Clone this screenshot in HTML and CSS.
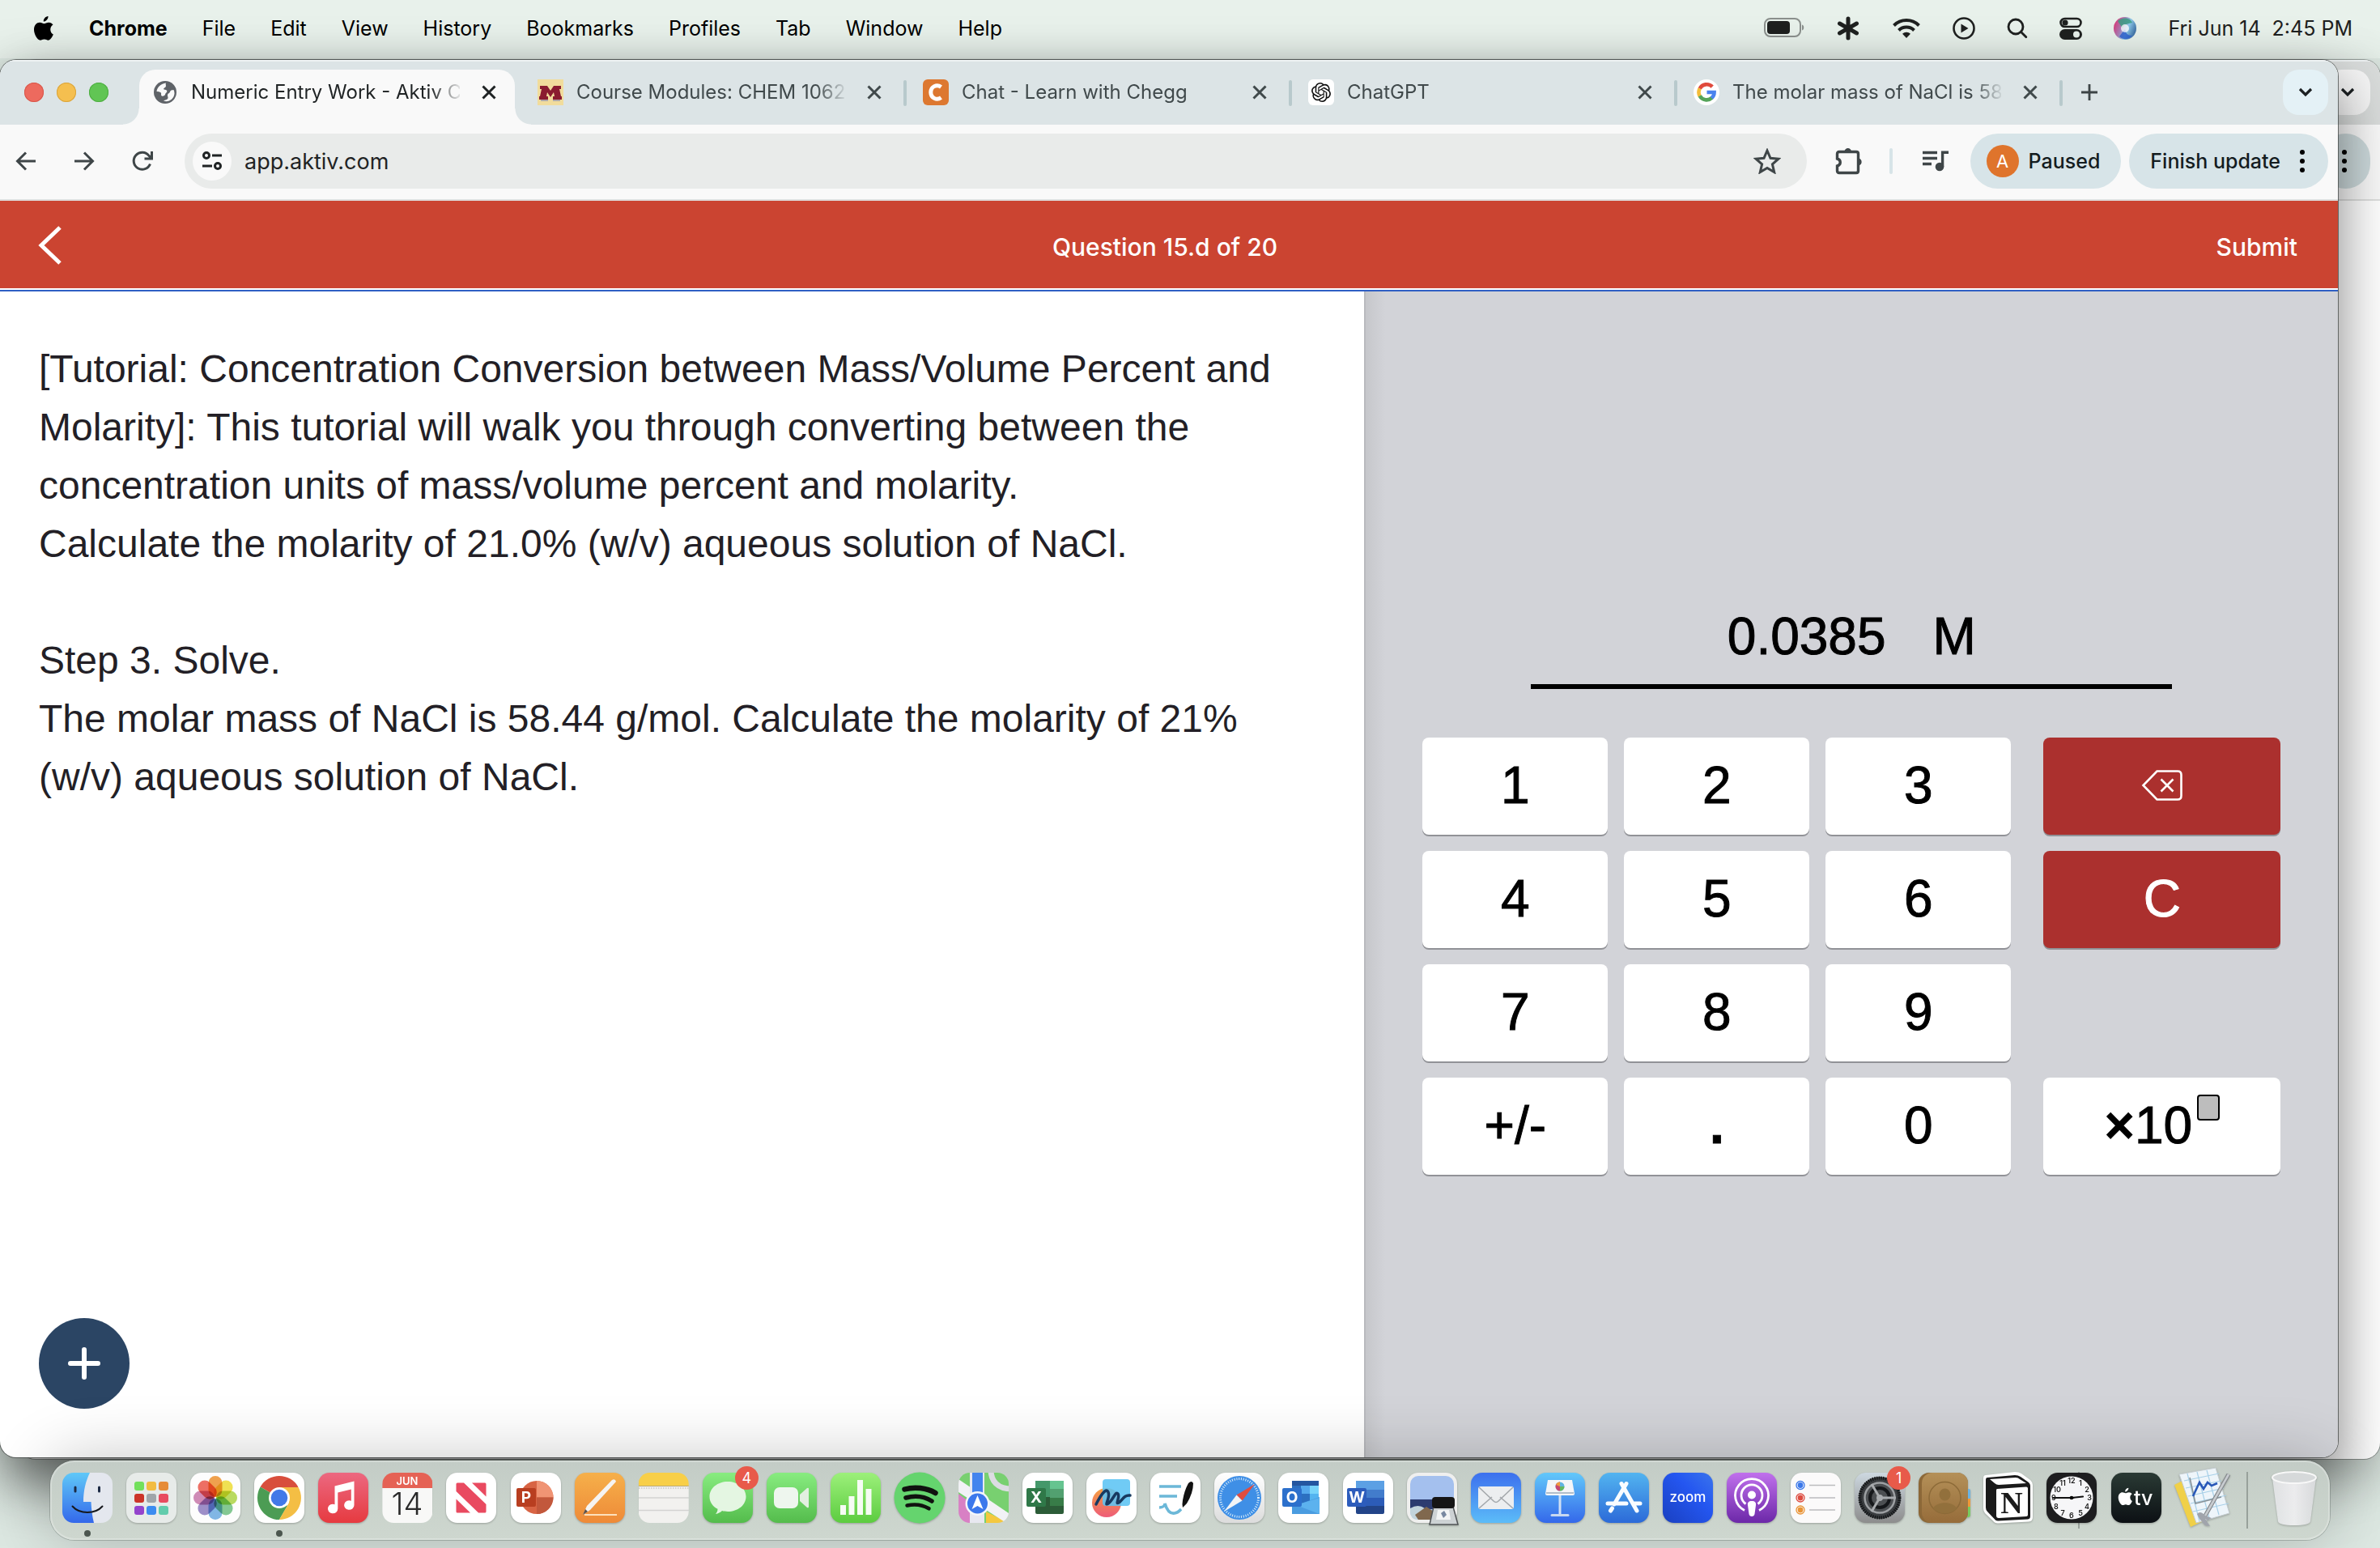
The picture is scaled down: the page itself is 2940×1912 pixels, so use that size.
FILE: index.html
```html
<!DOCTYPE html>
<html lang="en">
<head>
<meta charset="utf-8">
<title>Numeric Entry Work - Aktiv Chemistry</title>
<link rel="stylesheet" href="styles.css">
</head>
<body>
<header class="menubar">
  <nav class="menus" aria-label="Menu bar">
    <button class="menu menu-apple" aria-label="Apple"><svg width="26" height="32" viewBox="0 0 26 32"><path d="M18.500 1c.2 3.400-2.600 6.500-5.700 6.600C12.400 4.400 15.300 1.300 18.500 1zM24.800 23.600c-1.300 3.300-3.700 7.100-6.200 7.100-1.900 0-2.500-1.200-4.900-1.200s-3 1.200-4.900 1.200C5.200 30.700 1 23.500 1 17.600c0-5.600 3.500-8.800 7.100-8.800 2.300 0 4 1.400 5.400 1.400 1.300 0 3.300-1.500 5.800-1.500 2.100 0 4.100 1.100 5.200 2.800-4.700 2.900-3.900 9.900.3 12.100z"/></svg></button>
    <button class="menu menu-app">Chrome</button>
    <button class="menu">File</button>
    <button class="menu">Edit</button>
    <button class="menu">View</button>
    <button class="menu">History</button>
    <button class="menu">Bookmarks</button>
    <button class="menu">Profiles</button>
    <button class="menu">Tab</button>
    <button class="menu">Window</button>
    <button class="menu">Help</button>
  </nav>
  <div class="status">
    <svg width="50" height="26" viewBox="0 0 50 26"><rect x="1" y="1" width="44" height="22" rx="7" fill="none" stroke="#8b908d" stroke-width="2"/><rect x="4" y="4" width="28" height="16" rx="4" fill="#1f2120"/><path d="M47 8.500c3 .8 3 6.200 0 7z" fill="#8b908d"/></svg>
    <svg width="30" height="30" viewBox="0 0 30 30" stroke="#1f2120" stroke-width="5" stroke-linecap="round"><path d="M15 3v24M4.500 9l21 12M25.500 9l-21 12"/></svg>
    <svg width="36" height="28" viewBox="0 0 36 28" fill="none" stroke="#1f2120" stroke-width="4"><path d="M2.500 10.500a22 22 0 0 1 31 0M8.500 16.500a13.500 13.500 0 0 1 19 0"/><path d="M18 26l-5-5.200a7.200 7.200 0 0 1 10 0z" fill="#1f2120" stroke="none"/></svg>
    <svg width="28" height="28" viewBox="0 0 28 28"><circle cx="14" cy="14" r="12.500" fill="none" stroke="#1f2120" stroke-width="2.600"/><path d="M10.500 8.500v11l9-5.500z" fill="#1f2120"/></svg>
    <svg width="26" height="26" viewBox="0 0 26 26" fill="none" stroke="#1f2120" stroke-width="2.800" stroke-linecap="round"><circle cx="11" cy="11" r="9"/><path d="M17.800 17.800l6 6"/></svg>
    <svg width="28" height="28" viewBox="0 0 28 28"><rect x="1.500" y="2" width="25" height="10" rx="5" fill="none" stroke="#1f2120" stroke-width="2.600"/><circle cx="7" cy="7" r="3.600" fill="#1f2120"/><rect x="0" y="15" width="28" height="13" rx="6.500" fill="#1f2120"/><circle cx="21" cy="21.500" r="4" fill="#e8f1eb"/></svg>
    <svg width="28" height="28" viewBox="0 0 28 28"><defs><linearGradient id="siri" x1="0" y1=".3" x2="1" y2=".7"><stop offset="0" stop-color="#d83a78"/><stop offset=".35" stop-color="#a880b8"/><stop offset=".6" stop-color="#8cc8e8"/><stop offset="1" stop-color="#34649c"/></linearGradient></defs><circle cx="14" cy="14" r="14" fill="url(#siri)"/><path d="M5 5c5-5 15-5 18 2-6 1-11 3-12 7z" fill="#3c9c84" opacity=".85"/><path d="M7 24c5 5 12 4 16-1-6 0-8-3-9-8z" fill="#2a5fd0" opacity=".8"/><circle cx="14" cy="14" r="5" fill="#fff" opacity=".75"/></svg>
    <time class="clock">Fri Jun 14&nbsp; 2:45 PM</time>
  </div>
</header>

<main class="desktop">
  <section class="window window-back" aria-label="Background window">
    <div class="tabstrip"><button class="tab-search" aria-label="Search tabs"><svg width="18" height="12" viewBox="0 0 18 12"><path d="M2 2l7 7 7-7" fill="none" stroke="#1c2022" stroke-width="3.200"/></svg></button></div>
    <div class="toolbar"><button class="pill pill-update" aria-label="Menu"><svg width="6" height="28" viewBox="0 0 6 28"><circle cx="3" cy="3" r="3"/><circle cx="3" cy="14" r="3"/><circle cx="3" cy="25" r="3"/></svg></button></div>
  </section>

  <section class="window window-front" aria-label="Chrome">
    <div class="tabstrip">
      <div class="lights"><button class="light light-close" aria-label="Close"></button><button class="light light-min" aria-label="Minimize"></button><button class="light light-zoom" aria-label="Zoom"></button></div>
      <ul class="tabs">
        <li class="tab tab-active">
          <svg class="favicon" viewBox="0 0 32 32"><circle cx="16" cy="16" r="14" fill="#5f6368"/><path d="M17 4.500c-6 1-11 5-11.500 10.500 2 .2 5 .3 5.500 2 .4 1.300-.6 2.800.8 3.500 1.600.7 4-.2 4.500-2.500.3-1.500 2-1.500 2-3.500 0-1.800-3-1.500-4-2.200-.8-1 1.800-2.300 2.500-3.300.7-1.200-.8-3 .2-4.500zM26.500 13c-2.500.2-4 .6-4.500 2.500-.5 1.800-2.500 1.500-3 3.500-.4 2 1 2.500.4 4.500-.5 1.600-3.400 2-5.400 3 6 2.500 13-2 13.500-9 0-1.700-.3-3.200-1-4.500z" fill="#fafafa"/></svg>
          <a class="tab-title" href="#">Numeric Entry Work - Aktiv C</a>
          <button class="tab-close" aria-label="Close tab"><svg viewBox="0 0 24 24"><path d="M4.500 4.500l15 15M19.500 4.500l-15 15"/></svg></button>
        </li>
        <li class="tab">
          <svg class="favicon" viewBox="0 0 32 32"><rect width="32" height="32" fill="#f1dc9c"/><path d="M4 23h9v4H4zM19 23h9v4h-9z" fill="#b0a8a8"/><path d="M3 8h9l4 6 4-6h9v4h-2l2 9h1v4H19v-4h2l-1-5-4 6-4-6-1 5h2v4H2v-4h1l2-9H3z" fill="#8a1c30"/></svg>
          <a class="tab-title" href="#">Course Modules: CHEM 1062</a>
          <button class="tab-close" aria-label="Close tab"><svg viewBox="0 0 24 24"><path d="M4.500 4.500l15 15M19.500 4.500l-15 15"/></svg></button>
        </li>
        <li class="tab">
          <svg class="favicon" viewBox="0 0 32 32"><rect width="32" height="32" rx="6" fill="#dd7830"/><path d="M22.500 9.500C17 5.500 9.800 9 9.800 16S17 26.500 22.500 22.500" fill="none" stroke="#fff" stroke-width="5"/></svg>
          <a class="tab-title" href="#">Chat - Learn with Chegg</a>
          <button class="tab-close" aria-label="Close tab"><svg viewBox="0 0 24 24"><path d="M4.500 4.500l15 15M19.500 4.500l-15 15"/></svg></button>
        </li>
        <li class="tab">
          <svg class="favicon" viewBox="-4 -4 32 32"><rect x="-4" y="-4" width="32" height="32" rx="6" fill="#fff"/><path fill="#111" d="M22.2819 9.8211a5.9847 5.9847 0 0 0-.5157-4.9108 6.0462 6.0462 0 0 0-6.5098-2.9A6.0651 6.0651 0 0 0 4.9807 4.1818a5.9847 5.9847 0 0 0-3.9977 2.9 6.0462 6.0462 0 0 0 .7427 7.0966 5.98 5.98 0 0 0 .511 4.9107 6.051 6.051 0 0 0 6.5146 2.9001A5.9847 5.9847 0 0 0 13.2599 24a6.0557 6.0557 0 0 0 5.7718-4.2058 5.9894 5.9894 0 0 0 3.9977-2.9001 6.0557 6.0557 0 0 0-.7475-7.0729zm-9.022 12.6081a4.4755 4.4755 0 0 1-2.8764-1.0408l.1419-.0804 4.7783-2.7582a.7948.7948 0 0 0 .3927-.6813v-6.7369l2.02 1.1686a.071.071 0 0 1 .038.052v5.5826a4.504 4.504 0 0 1-4.4945 4.4944zm-9.6607-4.1254a4.4708 4.4708 0 0 1-.5346-3.0137l.142.0852 4.783 2.7582a.7712.7712 0 0 0 .7806 0l5.8428-3.3685v2.3324a.0804.0804 0 0 1-.0332.0615L9.74 19.9502a4.4992 4.4992 0 0 1-6.1408-1.6464zM2.3408 7.8956a4.485 4.485 0 0 1 2.3655-1.9728V11.6a.7664.7664 0 0 0 .3879.6765l5.8144 3.3543-2.0201 1.1685a.0757.0757 0 0 1-.071 0l-4.8303-2.7865A4.504 4.504 0 0 1 2.3408 7.872zm16.5963 3.8558L13.1038 8.364 15.1192 7.2a.0757.0757 0 0 1 .071 0l4.8303 2.7913a4.4944 4.4944 0 0 1-.6765 8.1042v-5.6772a.79.79 0 0 0-.407-.667zm2.0107-3.0231l-.142-.0852-4.7735-2.7818a.7759.7759 0 0 0-.7854 0L9.409 9.2297V6.8974a.0662.0662 0 0 1 .0284-.0615l4.8303-2.7866a4.4992 4.4992 0 0 1 6.6802 4.66zM8.3065 12.863l-2.02-1.1638a.0804.0804 0 0 1-.038-.0567V6.0742a4.4992 4.4992 0 0 1 7.3757-3.4537l-.142.0805L8.704 5.459a.7948.7948 0 0 0-.3927.6813zm1.0976-2.3654l2.602-1.4998 2.6069 1.4998v2.9994l-2.5974 1.4997-2.6067-1.4997Z"/></svg>
          <a class="tab-title" href="#">ChatGPT</a>
          <button class="tab-close" aria-label="Close tab"><svg viewBox="0 0 24 24"><path d="M4.500 4.500l15 15M19.500 4.500l-15 15"/></svg></button>
        </li>
        <li class="tab">
          <svg class="favicon" viewBox="0 0 32 32"><circle cx="16" cy="16" r="16" fill="#fff"/><g fill="none" stroke-width="4.600"><path d="M23.200 9.200A9.600 9.600 0 0 0 7.700 11.600" stroke="#e04a3c"/><path d="M7.700 11.400a9.600 9.600 0 0 0 0 9.200" stroke="#f4bd3a"/><path d="M7.700 20.400a9.600 9.600 0 0 0 15 2.400" stroke="#55a45a"/><path d="M22.400 23.100a9.600 9.600 0 0 0 3.200-7.100H16.500" stroke="#4b83ee"/></g></svg>
          <a class="tab-title" href="#">The molar mass of NaCl is 58</a>
          <button class="tab-close" aria-label="Close tab"><svg viewBox="0 0 24 24"><path d="M4.500 4.500l15 15M19.500 4.500l-15 15"/></svg></button>
        </li>
      </ul>
      <button class="new-tab" aria-label="New tab"><svg width="22" height="22" viewBox="0 0 22 22"><path d="M11 1v20M1 11h20" stroke="#3d4446" stroke-width="2.800"/></svg></button>
      <button class="tab-search" aria-label="Search tabs"><svg width="18" height="12" viewBox="0 0 18 12"><path d="M2 2l7 7 7-7" fill="none" stroke="#1c2022" stroke-width="3.200"/></svg></button>
    </div>

    <div class="toolbar">
      <div class="nav-buttons">
        <button aria-label="Back"><svg width="28" height="28" viewBox="0 0 28 28"><path d="M26 14H4M14 3.500L3.500 14 14 24.500"/></svg></button>
        <button aria-label="Forward"><svg width="28" height="28" viewBox="0 0 28 28"><path d="M2 14h22M14 3.500L24.500 14 14 24.500"/></svg></button>
        <button aria-label="Reload"><svg width="28" height="28" viewBox="0 0 28 28"><path d="M23.500 17.500A10.500 10.500 0 1 1 22 7.300L25 10.500M25.500 2v9h-9"/></svg></button>
      </div>
      <div class="omnibox">
        <button class="site-info" aria-label="Site information"><svg width="26" height="24" viewBox="0 0 26 24" fill="none" stroke="#1f2324" stroke-width="3"><circle cx="6" cy="5" r="3.500"/><path d="M13 5h12M1 18h12"/><circle cx="20" cy="18" r="3.500"/></svg></button>
        <input class="url" type="text" aria-label="Address" value="app.aktiv.com">
        <button class="star" aria-label="Bookmark"><svg width="34" height="32" viewBox="0 0 34 32"><path d="M17 3l4 9.300 10 .9-7.600 6.600 2.300 9.800L17 24.400l-8.700 5.200 2.300-9.800L3 13.200l10-.9z" fill="none" stroke="#3f4648" stroke-width="3"/></svg></button>
      </div>
      <button class="tool" aria-label="Extensions"><svg width="36" height="36" viewBox="0 0 36 36"><path d="M3.500 9c0-1.500.8-2.500 2.500-2.500H27c1.500 0 2.500 1 2.500 2.500v21c0 1.500-1 2.500-2.500 2.500H6c-1.700 0-2.500-1-2.500-2.500v-6c5-1.500 5-7.500 0-9z" fill="none" stroke="#3f4648" stroke-width="3.400"/><path d="M12.500 6.500C12.500.500 21 .500 21 6.500zM29.500 14.500c5.500 0 5.500 9 0 9z" fill="#3f4648"/></svg></button>
      <span class="rule"></span>
      <button class="tool" aria-label="Media controls"><svg width="34" height="30" viewBox="0 0 34 30"><path d="M1 4.500h18M1 11.500h18M1 18.500h11" stroke="#3f4648" stroke-width="3.400"/><circle cx="22" cy="22" r="5.300" fill="#3f4648"/><path d="M25.600 22V4.300h7.400" fill="none" stroke="#3f4648" stroke-width="3.400"/></svg></button>
      <button class="pill pill-profile"><span class="avatar">A</span>Paused</button>
      <button class="pill pill-update">Finish update<svg width="6" height="28" viewBox="0 0 6 28"><circle cx="3" cy="3" r="3"/><circle cx="3" cy="14" r="3"/><circle cx="3" cy="25" r="3"/></svg></button>
    </div>

    <header class="app-header">
      <button class="app-back" aria-label="Back"><svg width="40" height="56" viewBox="0 0 40 56"><path d="M34 4L11 26l23 22" fill="none" stroke="#fff" stroke-width="5"/></svg></button>
      <h1 class="app-title">Question 15.d of 20</h1>
      <button class="app-submit">Submit</button>
    </header>

    <div class="app-body">
      <article class="question">
        <div class="prompt">
          <p>[Tutorial: Concentration Conversion between Mass/Volume Percent and Molarity]: This tutorial will walk you through converting between the concentration units of mass/volume percent and molarity.</p>
          <p>Calculate the molarity of 21.0% (w/v) aqueous solution of NaCl.</p>
          <p class="step">Step 3. Solve.</p>
          <p>The molar mass of NaCl is 58.44 g/mol. Calculate the molarity of 21% (w/v) aqueous solution of NaCl.</p>
        </div>
        <button class="fab" aria-label="Add"><svg width="40" height="40" viewBox="0 0 40 40"><path d="M20 3v34M3 20h34" stroke="#fff" stroke-width="6" stroke-linecap="round"/></svg></button>
      </article>
      <aside class="answer">
        <div class="display"><output>0.0385</output><span>M</span></div>
        <div class="keypad">
          <button class="key">1</button><button class="key">2</button><button class="key">3</button>
          <button class="key key-red key-wide" aria-label="Delete"><svg width="52" height="40" viewBox="0 0 52 40" fill="none" stroke="#fff" stroke-width="2.600"><path d="M19.500 2.500H45q4.500 0 4.500 4.500v26q0 4.500-4.500 4.500H19.500L2.500 20z"/><path d="M24.500 12.500l15 15M39.500 12.500l-15 15"/></svg></button>
          <button class="key">4</button><button class="key">5</button><button class="key">6</button>
          <button class="key key-red key-wide">C</button>
          <button class="key">7</button><button class="key">8</button><button class="key">9</button>
          <button class="key key-first">+/-</button><button class="key key-dot">.</button><button class="key">0</button>
          <button class="key key-wide key-exp"><span class="times">×</span>10<span class="exp-box"></span></button>
        </div>
      </aside>
    </div>
  </section>

  <nav class="dock" aria-label="Dock">
    <svg class="defs" width="0" height="0" aria-hidden="true"><defs>
      <linearGradient id="g-finder" x2="0" y2="1"><stop stop-color="#5fc8f8"/><stop offset="1" stop-color="#3468ea"/></linearGradient>
      <linearGradient id="g-music" x2="0" y2="1"><stop stop-color="#ec6880"/><stop offset="1" stop-color="#e63a40"/></linearGradient>
      <linearGradient id="g-pages" x2="0" y2="1"><stop stop-color="#f6b04a"/><stop offset="1" stop-color="#ee8a38"/></linearGradient>
      <linearGradient id="g-green" x2="0" y2="1"><stop stop-color="#88ec80"/><stop offset="1" stop-color="#54bc4c"/></linearGradient>
      <linearGradient id="g-numbers" x2="0" y2="1"><stop stop-color="#9cf07a"/><stop offset="1" stop-color="#5ccc40"/></linearGradient>
      <linearGradient id="g-white" x2="0" y2="1"><stop stop-color="#fff"/><stop offset="1" stop-color="#dcdcdc"/></linearGradient>
      <linearGradient id="g-sky" x2="0" y2="1"><stop stop-color="#62c8fa"/><stop offset="1" stop-color="#3468ea"/></linearGradient>
      <linearGradient id="g-mail" x2="0" y2="1"><stop stop-color="#3c70ee"/><stop offset="1" stop-color="#5cbcf8"/></linearGradient>
      <linearGradient id="g-store" x2="0" y2="1"><stop stop-color="#52b4f0"/><stop offset="1" stop-color="#2c6ad8"/></linearGradient>
      <linearGradient id="g-zoom" x1="1" x2="0" y2="1"><stop stop-color="#3a74ec"/><stop offset=".4" stop-color="#2456f0"/><stop offset="1" stop-color="#1a40c0"/></linearGradient>
      <linearGradient id="g-pod" x2="0" y2="1"><stop stop-color="#c070ec"/><stop offset="1" stop-color="#6c28a8"/></linearGradient>
      <linearGradient id="g-freeform" x2="0" y2="1"><stop stop-color="#f4a040"/><stop offset="1" stop-color="#ee5c78"/></linearGradient>
      <linearGradient id="g-set" x2="0" y2="1"><stop stop-color="#cdd8e0"/><stop offset="1" stop-color="#8c8c8c"/></linearGradient>
      <linearGradient id="g-contacts" x2="0" y2="1"><stop stop-color="#b49058"/><stop offset="1" stop-color="#966c3a"/></linearGradient>
      <linearGradient id="g-tv" x2="0" y2="1"><stop stop-color="#2a3a34"/><stop offset="1" stop-color="#0c1014"/></linearGradient>
      <linearGradient id="g-trash"><stop stop-color="#e4e6e8"/><stop offset=".5" stop-color="#f2f2f4"/><stop offset="1" stop-color="#dcdee0"/></linearGradient>
      <clipPath id="tile"><rect width="62" height="62" rx="14"/></clipPath>
    </defs></svg>
    <div class="dock-apps">
      <button class="app running" aria-label="Finder"><svg viewBox="0 0 62 62" clip-path="url(#tile)"><rect width="62" height="62" fill="url(#g-finder)"/><path d="M34 0h28v62H39c-2-8-3-16-3.500-26H26C26 22 29 10 34 0z" fill="#e4e7ee"/><path d="M16 18v5M45.500 18v5" stroke="#1c2a44" stroke-width="3" stroke-linecap="round"/><path d="M12.500 41.500c9 10 28 10 37 0" fill="none" stroke="#16181c" stroke-width="2" stroke-linecap="round"/></svg></button>
      <button class="app" aria-label="Launchpad"><svg viewBox="0 0 62 62"><rect width="62" height="62" rx="14" fill="#e7ebe9"/><rect x="10" y="11" width="12" height="11" rx="3" fill="#72e05c"/><rect x="25" y="11" width="12" height="11" rx="3" fill="#f2bc42"/><rect x="40" y="11" width="12" height="11" rx="3" fill="#e68c38"/><rect x="10" y="26" width="12" height="11" rx="3" fill="#cc3428"/><rect x="25" y="26" width="12" height="11" rx="3" fill="#a0a6aa"/><rect x="40" y="26" width="12" height="11" rx="3" fill="#e84c60"/><rect x="10" y="41" width="12" height="11" rx="3" fill="#9444cc"/><rect x="25" y="41" width="12" height="11" rx="3" fill="#3c8cf0"/><rect x="40" y="41" width="12" height="11" rx="3" fill="#62ccac"/></svg></button>
      <button class="app" aria-label="Photos"><svg viewBox="0 0 62 62"><rect width="62" height="62" rx="14" fill="#fdfdfd"/><g class="petals"><rect x="22.500" y="4" width="17" height="26" rx="8.500" fill="#f0983a"/><rect x="22.500" y="4" width="17" height="26" rx="8.500" fill="#f0e040" transform="rotate(45 31 31)"/><rect x="22.500" y="4" width="17" height="26" rx="8.500" fill="#b4d850" transform="rotate(90 31 31)"/><rect x="22.500" y="4" width="17" height="26" rx="8.500" fill="#78c488" transform="rotate(135 31 31)"/><rect x="22.500" y="4" width="17" height="26" rx="8.500" fill="#74b0e4" transform="rotate(180 31 31)"/><rect x="22.500" y="4" width="17" height="26" rx="8.500" fill="#9484c4" transform="rotate(225 31 31)"/><rect x="22.500" y="4" width="17" height="26" rx="8.500" fill="#cc80b0" transform="rotate(270 31 31)"/><rect x="22.500" y="4" width="17" height="26" rx="8.500" fill="#ee6054" transform="rotate(315 31 31)"/></g></svg></button>
      <button class="app running" aria-label="Google Chrome"><svg viewBox="0 0 62 62"><rect width="62" height="62" rx="14" fill="#fff"/><path d="M31 31L7.600 17.500A27 27 0 0 1 54.400 17.500z" fill="#d84e3c"/><path d="M31 31L7.600 17.500A27 27 0 0 0 31 58l10-17z" fill="#4c9c54"/><path d="M31 18H54.600A27 27 0 0 1 31 58l12-21z" fill="#f4be44"/><circle cx="31" cy="31" r="13" fill="#fff"/><circle cx="31" cy="31" r="10.300" fill="#4279e8"/></svg></button>
      <button class="app" aria-label="Music"><svg viewBox="0 0 62 62"><rect width="62" height="62" rx="14" fill="url(#g-music)"/><path d="M20.500 16.500L44.500 10.500V40a6.200 5.800 0 1 1-3.700-5.300V20.500l-16.500 4V44.500a6.200 5.800 0 1 1-3.800-5.300z" fill="#fff"/></svg></button>
      <button class="app" aria-label="Calendar"><svg viewBox="0 0 62 62" clip-path="url(#tile)"><rect width="62" height="62" fill="#f8f8f7"/><rect width="62" height="19" fill="#e56255"/><text class="cal-month" x="31" y="15">JUN</text><text class="cal-day" x="31" y="52">14</text></svg></button>
      <button class="app" aria-label="News"><svg viewBox="0 0 62 62"><rect width="62" height="62" rx="14" fill="#fff"/><path d="M14 12.500h8l27.500 26.500v9q0 1.500-1.500 1.500h-8L12.500 23v-9q0-1.500 1.500-1.500zM32 12.500h16q1.500 0 1.500 1.500v15.500zM12.500 32.500l17.500 17H14q-1.500 0-1.500-1.500z" fill="#e94a60"/></svg></button>
      <button class="app" aria-label="PowerPoint"><svg viewBox="0 0 62 62"><rect width="62" height="62" rx="14" fill="#fff"/><circle cx="32" cy="30.500" r="20.500" fill="#d86444"/><path d="M32 10a20.500 20.500 0 0 1 20.500 20.500H32z" fill="#f09474"/><path d="M32 30.500h20.500A20.500 20.500 0 0 1 32 51z" fill="#c2583c"/><rect x="7" y="19" width="24" height="23" rx="2" fill="#b83e20"/><text class="office" x="19" y="37">P</text></svg></button>
      <button class="app" aria-label="Pages"><svg viewBox="0 0 62 62"><rect width="62" height="62" rx="14" fill="url(#g-pages)"/><path d="M10 52l5-11L46 9q4-2 5 2L19 46z" fill="#f6f4f2"/><path d="M10 52l3-7 3 3z" fill="#5c5048"/><path d="M12 52h40" stroke="#fde0bc" stroke-width="2"/></svg></button>
      <button class="app" aria-label="Notes"><svg viewBox="0 0 62 62" clip-path="url(#tile)"><rect width="62" height="62" fill="#f2f1ef"/><rect width="62" height="16" fill="#f8cf48"/><path d="M0 16.500h62" stroke="#b8a878" stroke-width="1"/><path d="M0 19h62" stroke="#c8c6c4" stroke-width="1.500" stroke-dasharray="1.500 1.500"/><path d="M0 31h62M0 46.500h62" stroke="#d4d3d2" stroke-width="1.500"/></svg></button>
      <button class="app" aria-label="Messages"><svg viewBox="0 0 62 62"><rect width="62" height="62" rx="14" fill="url(#g-green)"/><path d="M31 11c12.500 0 22.500 8 22.500 18.500S43.500 48 31 48c-2.500 0-5-.3-7-.9-2 2-5 3.600-8 3.900 1.700-2 2.500-4 2.500-6.300C12 41.500 8.500 36 8.500 29.500 8.500 19 18.500 11 31 11z" fill="#e4f6e2"/></svg><span class="badge">4</span></button>
      <button class="app" aria-label="FaceTime"><svg viewBox="0 0 62 62"><rect width="62" height="62" rx="14" fill="url(#g-green)"/><rect x="9" y="18" width="30" height="26" rx="7" fill="#eef6ee"/><path d="M41 27l9-8q2-1 2 1v22q0 2-2 1l-9-8z" fill="#e2efe0"/></svg></button>
      <button class="app" aria-label="Numbers"><svg viewBox="0 0 62 62"><rect width="62" height="62" rx="14" fill="url(#g-numbers)"/><path d="M12 40h7v12h-7zM22.500 29h7v23h-7zM33 9h7v43h-7zM43.500 20h7v32h-7z" fill="#f6fcf4"/></svg></button>
      <button class="app" aria-label="Spotify"><svg viewBox="0 0 62 62"><circle cx="31" cy="31" r="31.500" fill="#65d46e"/><g fill="none" stroke="#10120f" stroke-linecap="round"><path d="M12.500 20.500c12-3.500 27-2 38 4.500" stroke-width="6.500"/><path d="M14 31c11-3 23-1.500 32 4" stroke-width="5.500"/><path d="M15.500 40.500c9-2 19-1 27 3.800" stroke-width="4.500"/></g></svg></button>
      <button class="app" aria-label="Maps"><svg viewBox="0 0 62 62" clip-path="url(#tile)"><rect width="62" height="62" fill="#78d070"/><path d="M0 26l24 18v18H0z" fill="#d880c4"/><path d="M34 62V48l28 14z" fill="#f4c840"/><path d="M0 8l62 42v14L0 24z" fill="#f2f2f6"/><path d="M14 0h18v62H14z" fill="#e8e8f0"/><path d="M40-4c0 14 8 24 26 24" fill="none" stroke="#dcdce2" stroke-width="7"/><path d="M17 0h13v30H17z" fill="#4484ee"/><circle cx="23.500" cy="38" r="15" fill="#f4f6fa"/><circle cx="23.500" cy="38" r="12.500" fill="#3c78ec"/><path d="M23.500 28l7 17-7-4-7 4z" fill="#fff"/></svg></button>
      <button class="app" aria-label="Excel"><svg viewBox="0 0 62 62"><rect width="62" height="62" rx="14" fill="#fff"/><rect x="16" y="10" width="35" height="41" rx="2" fill="#2c5c38"/><path d="M16 10h18v20H16z" fill="#44986a"/><path d="M34 10h17v10H34z" fill="#66c490"/><path d="M34 20h17v11H34z" fill="#52a070"/><path d="M34 31h17v10H34z" fill="#387c48"/><rect x="5" y="19" width="24" height="23" rx="2" fill="#2f7848"/><text class="office" x="17" y="37">X</text></svg></button>
      <button class="app" aria-label="Freeform"><svg viewBox="0 0 62 62"><rect width="62" height="62" rx="14" fill="#fff"/><circle cx="25" cy="37" r="18" fill="url(#g-freeform)"/><rect x="20" y="8" width="34" height="33" rx="4" fill="#5cc4f4" opacity=".88"/><path d="M12 39c4-8 12-22 15-15s-6 18 0 14 9-16 12-12-4 14 1 11 6-10 14-9" fill="none" stroke="#183a60" stroke-width="3.500" stroke-linecap="round"/></svg></button>
      <button class="app" aria-label="Goodnotes"><svg viewBox="0 0 62 62"><rect width="62" height="62" rx="14" fill="#fff"/><path d="M11 17h27M11 29h22M11 43c4 0 7-2 7-5 2 7 6 13 12 12 4-.5 6-3 8-5" fill="none" stroke="#6cb8d8" stroke-width="3.600"/><path d="M47 13q4-4 6 0 0 12-8 25l-5 5q-1-4 0-9 2-12 7-21z" fill="#111"/></svg></button>
      <button class="app" aria-label="Safari"><svg viewBox="0 0 62 62"><rect width="62" height="62" rx="14" fill="url(#g-white)"/><circle cx="31" cy="31" r="27" fill="#3f8fe6"/><circle cx="31" cy="31" r="23.500" fill="none" stroke="#d8ecfa" stroke-width="3" stroke-dasharray="1 1.800"/><path d="M50 14L34.500 34.500 27.500 27.500z" fill="#e04c40"/><path d="M12 48l15.500-20.500 7 7z" fill="#f2f4f6"/></svg></button>
      <button class="app" aria-label="Outlook"><svg viewBox="0 0 62 62"><rect width="62" height="62" rx="14" fill="#fff"/><path d="M17 10h33v41H17z" fill="#2c70c0"/><path d="M17 10h33v6H17z" fill="#2456a0"/><path d="M28 16h11v10H28z" fill="#54a8ec"/><path d="M39 16h11v10H39z" fill="#78d4fa"/><path d="M39 26h11v10H39z" fill="#54b4f0"/><path d="M17 42l34-12v21H17z" fill="#4a9ce0"/><path d="M22 40l29-9v20z" fill="#5cb2ee"/><rect x="5" y="19" width="24" height="23" rx="2" fill="#2c70cc"/><text class="office" x="17" y="37">O</text></svg></button>
      <button class="app" aria-label="Word"><svg viewBox="0 0 62 62"><rect width="62" height="62" rx="14" fill="#fff"/><rect x="16" y="10" width="35" height="41" rx="2" fill="#224488"/><path d="M16 10h35v11H16z" fill="#5ca0e4"/><path d="M16 21h35v10H16z" fill="#427ccc"/><path d="M16 31h35v10H16z" fill="#2c5cb8"/><rect x="5" y="19" width="24" height="23" rx="2" fill="#2c5cbc"/><text class="office" x="17" y="37">W</text></svg></button>
      <button class="app" aria-label="Preview"><svg viewBox="0 0 62 62"><rect width="62" height="62" rx="14" fill="#efefee"/><rect x="4" y="4" width="54" height="54" rx="10" fill="#a4c0ee"/><path d="M4 33h54v12H4z" fill="#2c3c70"/><path d="M4 44q10-6 18 0t20-2 16 2v4q0 10-10 10H14Q4 58 4 48z" fill="#c2d4dc"/><path d="M10 52l14-10 12 8-6 8H14z" fill="#80684e"/><path d="M33 42h24l6 22H28z" fill="#cdd2d4" stroke="#505456" stroke-width="1.500"/><path d="M38 46h14l2 12H36z" fill="#f2f4f4"/><path d="M42 50l4-3 3 5-4 4z" fill="#7888a0"/><rect x="31" y="30" width="28" height="14" rx="4" fill="#151515"/></svg></button>
      <button class="app" aria-label="Mail"><svg viewBox="0 0 62 62"><rect width="62" height="62" rx="14" fill="url(#g-mail)"/><rect x="9" y="17" width="44" height="28" rx="3" fill="#eceef0"/><path d="M10 44l16-14M52 44L36 30M10 18l18 17q3 3 6 0l18-17" fill="none" stroke="#a4a8ac" stroke-width="1.600"/></svg></button>
      <button class="app" aria-label="Keynote"><svg viewBox="0 0 62 62"><rect width="62" height="62" rx="14" fill="url(#g-sky)"/><path d="M16 9h30l3 17q0 2-2 2H15q-2 0-2-2z" fill="#f4f6f8"/><path d="M14 25h34" stroke="#9cacbc" stroke-width="1.500"/><path d="M31 28v23" stroke="#d0e0f4" stroke-width="3"/><path d="M21 52.500h20" stroke="#c8d8f0" stroke-width="3" stroke-linecap="round"/><circle cx="31" cy="17" r="5.500" fill="#60b4e0"/><path d="M31 17v-5.500a5.500 5.500 0 0 0 0 11z" fill="#c84870"/><path d="M31 17v5.500a5.500 5.500 0 0 0 5.500-5.500z" fill="#64b860"/><path d="M31 17v-5.500a5.500 5.500 0 0 0-5 3.500z" fill="#f09c3c"/></svg></button>
      <button class="app" aria-label="App Store"><svg viewBox="0 0 62 62"><rect width="62" height="62" rx="14" fill="url(#g-store)"/><path d="M34 13.500L19 39M28 13.500l19 33.500M11 38h23M43 38h8M16.500 44l-2 3" fill="none" stroke="#f8fcff" stroke-width="5" stroke-linecap="round"/></svg></button>
      <button class="app" aria-label="Zoom"><svg viewBox="0 0 62 62"><rect width="62" height="62" rx="14" fill="url(#g-zoom)"/><text class="zoom-word" x="31" y="36">zoom</text></svg></button>
      <button class="app" aria-label="Podcasts"><svg viewBox="0 0 62 62"><rect width="62" height="62" rx="14" fill="url(#g-pod)"/><g fill="none" stroke="#fff" stroke-width="2.800"><path d="M22 46.500a20.500 20.500 0 1 1 18 0"/><path d="M23.500 38.500a13 13 0 1 1 15 0"/></g><circle cx="31" cy="27.500" r="5" fill="#fff"/><path d="M31 35c4 0 5.500 2 5 5l-1.500 11c-.5 4-6.500 4-7 0L26 40c-.5-3 1-5 5-5z" fill="#fff"/></svg></button>
      <button class="app" aria-label="Reminders"><svg viewBox="0 0 62 62"><rect width="62" height="62" rx="14" fill="#fbfafa"/><path d="M23 15.500h32M23 31h32M23 46h32" stroke="#bcbcbe" stroke-width="1.500"/><g stroke-width="1.300"><circle cx="12" cy="15.500" r="5" fill="#fff" stroke="#3c78e8"/><circle cx="12" cy="31" r="5" fill="#fff" stroke="#dc4c40"/><circle cx="12" cy="46" r="5" fill="#fff" stroke="#e89438"/></g><circle cx="12" cy="15.500" r="3.400" fill="#3c78e8"/><circle cx="12" cy="31" r="3.400" fill="#dc4c40"/><circle cx="12" cy="46" r="3.400" fill="#e89438"/></svg></button>
      <button class="app" aria-label="System Settings"><svg viewBox="0 0 62 62"><rect width="62" height="62" rx="14" fill="url(#g-set)"/><circle cx="31" cy="31" r="26" fill="#3a3d40"/><circle cx="31" cy="31" r="24.500" fill="none" stroke="#141618" stroke-width="4" stroke-dasharray="1.500 1.200"/><circle cx="31" cy="31" r="18.500" fill="#4c4f52" stroke="#9c9fa2" stroke-width="2.500"/><circle cx="31" cy="31" r="12" fill="none" stroke="#15171a" stroke-width="4"/><path d="M31 31h20M31 31L21 14M31 31L21 48" stroke="#a8abae" stroke-width="3"/><circle cx="31" cy="31" r="4" fill="#a8abae"/></svg><span class="badge">1</span></button>
      <button class="app" aria-label="Contacts"><svg viewBox="0 0 62 62"><path d="M55 20h7q2 0 2 2v10h-9z" fill="#6cb4e4"/><path d="M55 32h9v10h-9z" fill="#f09838"/><path d="M55 42h9v10q0 3-3 3h-6z" fill="#78cc60"/><rect width="61" height="62" rx="13" fill="#8c6838"/><rect x="4" width="57" height="62" rx="13" fill="url(#g-contacts)"/><g fill="none" stroke="#8c6a38" stroke-width="1.500"><circle cx="32.500" cy="31" r="19.500"/></g><ellipse cx="32.500" cy="27" rx="7" ry="7.500" fill="#92703c"/><path d="M18 44c4-9 25-9 29 0-7 8-22 8-29 0z" fill="#92703c"/></svg></button>
      <button class="app" aria-label="Notion"><svg viewBox="0 0 62 62"><path d="M4 3L40-1q5 0 8 2l11 8q3 3 3 6v40q0 5-5 5.500l-38 2q-4 0-6-3L3 50q-2-3-2-6V7q0-4 3-4z" fill="#fff"/><path d="M6 6l34-3q4 0 7 2l10 7q2 2 2 4v38q0 3-3 3.500l-37 2q-3 0-4-2L6 48q-2-2-2-5V9q0-3 2-3z" fill="#1a1a1a"/><path d="M9 8l32-2q3 0 5 2l8 5-34 2q-3 0-5-2z" fill="#fff"/><path d="M18 20l36-2.500q2 0 2 2V52q0 2-2 2l-34 2q-3 0-3-3V22q0-2 1-2z" fill="#fff"/><text class="notion-n" x="36" y="50">N</text></svg></button>
      <button class="app app-clock" aria-label="Clock"><svg viewBox="0 0 62 62"><rect width="62" height="62" rx="14" fill="#1d1d1f"/><circle cx="31" cy="31" r="26.500" fill="#f6f6f8"/><g class="hours"><text x="31" y="12.500">12</text><text x="42" y="15.500">1</text><text x="50" y="23.500">2</text><text x="53" y="34">3</text><text x="50" y="44.500">4</text><text x="42" y="52.500">5</text><text x="31" y="55.500">6</text><text x="20" y="52.500">7</text><text x="12" y="44.500">8</text><text x="9" y="34">9</text><text x="13" y="23.500">10</text><text x="20" y="15.500">11</text></g><path d="M34 31H8M31 31l14-1.500" stroke="#111" stroke-width="2.200" stroke-linecap="round"/><circle cx="31" cy="31" r="2.300"/></svg></button>
      <button class="app" aria-label="TV"><svg viewBox="0 0 62 62"><rect width="62" height="62" rx="14" fill="url(#g-tv)"/><g transform="translate(8 18) scale(.72)"><path d="M18.500 1c.2 3.400-2.600 6.500-5.700 6.600C12.400 4.400 15.300 1.300 18.500 1zM24.800 23.600c-1.300 3.300-3.700 7.100-6.200 7.100-1.900 0-2.500-1.200-4.900-1.200s-3 1.200-4.900 1.200C5.200 30.700 1 23.500 1 17.600c0-5.600 3.500-8.800 7.100-8.800 2.300 0 4 1.400 5.400 1.400 1.300 0 3.300-1.500 5.800-1.500 2.100 0 4.100 1.100 5.200 2.800-4.700 2.900-3.900 9.900.3 12.100z" fill="#fff"/></g><text class="tv-word" x="28" y="40">tv</text></svg></button>
      <button class="app" aria-label="Grapher"><svg viewBox="0 0 62 62"><path d="M-1 15l12-6 34 46-26 12z" fill="#f0d048"/><path d="M5 2L50-6l17 56-41 12z" fill="#eef5fa" stroke="#c4ccd0"/><path d="M11 10l43-9M13 19l44-9M16 29l44-10M19 38l44-10M22 48l44-10M15 1l15 59M27-1l15 57M39-3l15 55" stroke="#a8d0e8" stroke-width="1.200"/><path d="M18 6l7 32 32-8" fill="none" stroke="#889298" stroke-width="1.600"/><path d="M22 29l8-17 5 8 5-8 5 4 7-3" fill="none" stroke="#2858b8" stroke-width="2.600"/><path d="M66 2L36 55" stroke="#84888c" stroke-width="5"/><path d="M66 2L36 55" stroke="#c8ccd0" stroke-width="2.600"/><path d="M27 51q4-5 10 2l8 3-5 3-3-2 6 9-6-1-7-8z" fill="#a0a4ac"/></svg></button>
    </div>
    <span class="dock-rule"></span>
    <button class="app app-trash" aria-label="Trash"><svg viewBox="0 0 56 68"><path d="M1 8l7 54q1 5 20 5t20-5l7-54z" fill="url(#g-trash)" opacity=".92"/><ellipse cx="28" cy="8" rx="27" ry="7" fill="#d6d9da" stroke="#f8f8f8" stroke-width="2"/></svg></button>
  </nav>
</main>
</body>
</html>
```
FILE: styles.css
```css
:root {
  --ui: Inter, "Liberation Sans", sans-serif;
  --doc: "Liberation Sans", Arial, sans-serif;
  --chrome: #f9f9f9;
  --strip: #dce4e6;
  --pill: #d7e4e8;
  --icon: #3f4648;
}

* { box-sizing: border-box; }

body {
  margin: 0;
  height: 100vh;
  display: flex;
  flex-direction: column;
  overflow: hidden;
  background: #dde8e2;
  font-family: var(--ui);
  color: #000;
}

button {
  margin: 0;
  padding: 0;
  border: 0;
  background: none;
  font: inherit;
  color: inherit;
}

svg { display: block; flex: none; }

/* Menu bar */
.menubar {
  height: 72px;
  flex: none;
  display: flex;
  align-items: center;
  justify-content: space-between;
  padding: 0 34px 2px 41px;
  background: #e8f1eb;
  font-size: 25px;
  line-height: 32px;
}
.menus { display: flex; align-items: center; gap: 43px; }
.menu-app { font-weight: 700; }
.status { display: flex; align-items: center; gap: 39px; color: #1f2120; }

/* Desktop */
.desktop { position: relative; flex: 1; }

.window {
  position: absolute;
  top: 2px;
  display: flex;
  flex-direction: column;
  overflow: hidden;
  border-radius: 20px;
  background: #fff;
}
.window-back {
  left: 24px;
  right: 0;
  bottom: 110px;
  box-shadow: 0 0 0 1px rgba(0, 0, 0, .3), 0 20px 60px rgba(0, 0, 0, .25);
}
.window-front {
  left: 0;
  right: 52px;
  bottom: 112px;
  box-shadow: 0 0 0 1px rgba(60, 64, 62, .7), 0 30px 70px rgba(0, 0, 0, .5);
}
.window-back .tabstrip { background: #d9dcdb; }
.window-back .tab-search { background: #f6f6f6; }
.window-back .pill { background: #cddadc; }
.window-back .toolbar { justify-content: flex-end; }

/* Tab strip */
.tabstrip {
  height: 80px;
  flex: none;
  display: flex;
  align-items: center;
  padding: 0 12px 0 30px;
  background: var(--strip);
  box-shadow: inset 0 2px #eef2f3;
}
.lights { display: flex; gap: 16px; width: 136px; }
.light { width: 24px; height: 24px; border-radius: 50%; }
.light-close { background: #ed6a5e; box-shadow: inset 0 0 0 1px #d8574b; }
.light-min { background: #f5bf4f; box-shadow: inset 0 0 0 1px #d9a43c; }
.light-zoom { background: #61c554; box-shadow: inset 0 0 0 1px #4ead42; }

.tabs { display: flex; align-self: flex-end; margin: 0; padding: 0; list-style: none; min-width: 0; }
.tab {
  position: relative;
  flex: 0 1 476px;
  width: 476px;
  height: 68px;
  display: flex;
  align-items: center;
  padding: 0 26px 12px 22px;
  color: #40494b;
  font-size: 24px;
}
.tab::after {
  content: "";
  position: absolute;
  right: -2px;
  top: 13px;
  width: 4px;
  height: 32px;
  border-radius: 2px;
  background: #b8c9cc;
}
.tab-active { color: #1f2324; }
.tab-active::before {
  content: "";
  position: absolute;
  inset: 0 6px;
  border-radius: 20px 20px 0 0;
  background: var(--chrome);
}
.tab-active::after {
  left: -14px;
  right: -14px;
  top: auto;
  bottom: 0;
  width: auto;
  height: 20px;
  border-radius: 0;
  background:
    radial-gradient(circle at 0 0, transparent 19px, var(--chrome) 20px) left / 20px 20px no-repeat,
    radial-gradient(circle at 100% 0, transparent 19px, var(--chrome) 20px) right / 20px 20px no-repeat;
}
.tab > * { position: relative; }
.favicon { width: 32px; height: 32px; margin-right: 16px; }
.tab-title {
  flex: 1;
  overflow: hidden;
  white-space: nowrap;
  color: inherit;
  text-decoration: none;
  line-height: 32px;
  -webkit-mask-image: linear-gradient(to right, #000 296px, transparent 336px);
  mask-image: linear-gradient(to right, #000 296px, transparent 336px);
}
.tab-close { width: 24px; height: 24px; margin-left: 24px; }
.tab-close svg { width: 24px; height: 24px; stroke: currentColor; stroke-width: 3; }
.new-tab { margin-left: 24px; }
.tab-search {
  width: 56px;
  height: 56px;
  margin-left: auto;
  display: grid;
  place-items: center;
  border-radius: 20px;
  background: #e4f1f6;
}

/* Toolbar */
.toolbar {
  height: 94px;
  flex: none;
  display: flex;
  align-items: center;
  padding: 0 12px 2px 18px;
  border-bottom: 2px solid #dedfde;
  background: var(--chrome);
  font-size: 25px;
}
.nav-buttons { display: flex; gap: 44px; margin-right: 38px; }
.nav-buttons svg { fill: none; stroke: var(--icon); stroke-width: 3; }
.omnibox {
  flex: 1;
  height: 68px;
  display: flex;
  align-items: center;
  padding: 0 32px 0 10px;
  border-radius: 34px;
  background: #e9ebea;
}
.site-info {
  width: 48px;
  height: 48px;
  display: grid;
  place-items: center;
  border-radius: 50%;
  background: var(--chrome);
}
.url {
  flex: 1;
  min-width: 0;
  margin: 0 16px;
  padding: 2px 0 0;
  border: 0;
  background: none;
  font: 27px/36px var(--ui);
  color: #1f2324;
}
.tool { margin-left: 34px; }
.rule { width: 4px; height: 32px; margin-left: 32px; border-radius: 2px; background: var(--pill); }
.rule + .tool { margin: 0 26px 0 36px; }
.pill {
  height: 68px;
  display: flex;
  align-items: center;
  border-radius: 34px;
  background: var(--pill);
  color: #141c1f;
  font-weight: 500;
}
.pill-profile { gap: 12px; padding: 0 26px 0 20px; }
.pill-update { gap: 24px; margin-left: 10px; padding: 0 29px 0 26px; }
.avatar {
  width: 40px;
  height: 40px;
  border-radius: 50%;
  background: #df742c;
  color: #fff;
  font-size: 22px;
  font-weight: 400;
  line-height: 40px;
  text-align: center;
}

/* Aktiv app */
.app-header {
  height: 112px;
  flex: none;
  display: grid;
  grid-template-columns: 1fr auto 1fr;
  align-items: center;
  padding: 2px 50px 0 40px;
  background: linear-gradient(#cb4431 108px, #fff 108px, #fff 110px, #2f5fc4 110px);
  color: #fff;
  font-size: 30px;
  font-weight: 500;
}
.app-title { margin: 0; font: inherit; }
.app-back { justify-self: start; }
.app-submit { justify-self: end; }

.app-body { flex: 1; display: grid; grid-template-columns: 7fr 5fr; }
.question {
  display: flex;
  flex-direction: column;
  justify-content: space-between;
  align-items: flex-start;
  padding: 60px 48px;
  font: 48px/72px var(--doc);
  color: #231f26;
}
.prompt { max-width: 1540px; }
.prompt p { margin: 0; }
.prompt .step { margin-top: 72px; }
.fab {
  width: 112px;
  height: 112px;
  display: grid;
  place-items: center;
  border-radius: 50%;
  background: #2b4564;
}

.answer {
  display: flex;
  flex-direction: column;
  align-items: center;
  justify-content: center;
  gap: 60px;
  padding-top: 40px;
  border-left: 2px solid #b9babe;
  background: linear-gradient(to right, #c6c7cb, #d2d3d8 24px);
  font: 64px/74px var(--doc);
  -webkit-text-stroke: 1px currentColor;
}
.display {
  width: 792px;
  display: flex;
  justify-content: center;
  gap: 58px;
  padding-bottom: 22px;
  border-bottom: 6px solid #000;
}
.keypad {
  display: grid;
  grid-template-columns: repeat(3, 229px) 313px;
  grid-auto-rows: 120px;
  gap: 20px;
}
.key {
  padding-bottom: 2px;
  border-radius: 8px;
  background: #fff;
  box-shadow: 0 2px #919297;
}
.key-wide {
  grid-column: 4;
  margin-left: 20px;
  display: flex;
  align-items: center;
  justify-content: center;
}
.key-first { grid-column: 1; }
.key-red { background: #ab302e; color: #fff; }
.key-dot { font-weight: 700; }
.times { -webkit-text-stroke: 3px currentColor; }
.exp-box {
  width: 28px;
  height: 32px;
  margin: 0 0 44px 6px;
  border: 2px solid #000;
  border-radius: 4px;
  background: #bdbdbd;
}

/* Dock */
.dock {
  position: absolute;
  left: 62px;
  right: 62px;
  bottom: 10px;
  height: 98px;
  display: flex;
  align-items: flex-start;
  padding: 15px 16px 0 15px;
  border-radius: 30px;
  background: linear-gradient(#c3ccc6, #ced7cf);
  box-shadow: inset 0 0 0 2px rgba(255, 255, 255, .25), 0 0 0 1px rgba(90, 100, 95, .35), 0 0 80px rgba(0, 0, 0, .24);
}
.defs { position: absolute; }
.dock-apps { flex: 1; display: flex; justify-content: space-between; }
.app { position: relative; width: 62px; height: 62px; }
.app svg {
  width: 62px;
  height: 62px;
  overflow: visible;
  filter: drop-shadow(0 1px 1px rgba(0, 0, 0, .25));
}
.running::after {
  content: "";
  position: absolute;
  left: 27px;
  top: 71px;
  width: 8px;
  height: 8px;
  border-radius: 50%;
  background: #4c564f;
}
.app-clock::before {
  content: "";
  position: absolute;
  left: 39px;
  top: -1px;
  width: 2px;
  height: 70px;
  background: #98a19b;
}
.badge {
  position: absolute;
  left: 40px;
  top: -8px;
  width: 29px;
  height: 29px;
  border-radius: 50%;
  background: #e85a4a;
  color: #fff;
  font-size: 18px;
  line-height: 29px;
  text-align: center;
}
.dock-rule { width: 2px; height: 70px; margin: -1px 29px 0 26px; background: #98a19b; }
.dock .app-trash, .dock .app-trash svg { width: 56px; height: 68px; }
.app-trash { margin-top: -2px; }

.petals rect { mix-blend-mode: multiply; opacity: .9; }
.app text { text-anchor: middle; font-family: var(--ui); }
.app .cal-month { font-size: 13px; font-weight: 600; fill: #fff; }
.app .cal-day { font-size: 38px; font-weight: 300; fill: #2a2a2a; }
.app .office { font-size: 19px; font-weight: 700; fill: #fff; }
.app .zoom-word { font-size: 17px; font-weight: 500; fill: #fff; }
.app .tv-word { font-size: 25px; font-weight: 500; fill: #fff; text-anchor: start; }
.app .notion-n { font-family: "Liberation Serif", serif; font-size: 38px; font-weight: 700; fill: #1a1a1a; }
.hours { font-size: 9px; font-weight: 600; fill: #1a1a1a; }
```
